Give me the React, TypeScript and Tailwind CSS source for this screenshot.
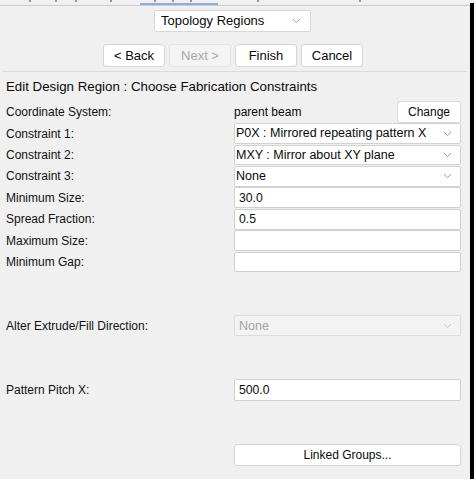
import React from "react";

const Chevron = ({ color = "#9a9a9a" }: { color?: string }) => (
  <svg width="9" height="6" viewBox="0 0 9 6" className="shrink-0">
    <path d="M1 1.2 L4.5 4.6 L8 1.2" fill="none" stroke={color} strokeWidth="1" />
  </svg>
);

const Label = ({ children }: { children: React.ReactNode }) => (
  <div className="w-[228px] shrink-0 flex items-center text-[12px] text-[#111]">{children}</div>
);

const Select = ({ value, disabled = false }: { value: string; disabled?: boolean }) => (
  <div
    className={
      disabled
        ? "w-[227px] h-full flex items-center justify-between pl-[4px] pr-[8px] bg-[#f3f3f3] border border-[#dcdcdc] rounded-[2px] text-[12.5px] text-[#a3a3a3]"
        : "w-[227px] h-full flex items-center justify-between pl-[1px] pr-[8px] bg-white border border-[#d2d2d2] rounded-[2px] text-[12.5px] text-[#0a0a0a]"
    }
  >
    <span className="whitespace-nowrap">{value}</span>
    <Chevron color={disabled ? "#c4c4c4" : "#9a9a9a"} />
  </div>
);

const Input = ({ value }: { value: string }) => (
  <div className="w-[227px] h-full flex items-center pl-[4px] bg-white border border-[#d0d0d0] rounded-[2px] text-[12.2px] text-[#0a0a0a]">
    {value}
  </div>
);

const TopButton = ({ children, disabled = false }: { children: React.ReactNode; disabled?: boolean }) => (
  <div
    className={
      disabled
        ? "w-[62px] h-[23px] flex items-center justify-center bg-[#f4f4f4] border border-[#e2e2e2] rounded-[3px] text-[13px] text-[#a8a8a8]"
        : "w-[62px] h-[23px] flex items-center justify-center bg-white border border-[#d6d6d6] rounded-[3px] text-[13px] text-[#0a0a0a]"
    }
  >
    {children}
  </div>
);

const Dot = () => <span className="w-[2px] h-[2px] bg-[#7a7a7a] rounded-full" />;

export default function App() {
  const rows: { label: string; kind: "select" | "input"; value: string }[] = [
    { label: "Constraint 1:", kind: "select", value: "P0X : Mirrored repeating pattern X" },
    { label: "Constraint 2:", kind: "select", value: "MXY : Mirror about XY plane" },
    { label: "Constraint 3:", kind: "select", value: "None" },
    { label: "Minimum Size:", kind: "input", value: "30.0" },
    { label: "Spread Fraction:", kind: "input", value: "0.5" },
    { label: "Maximum Size:", kind: "input", value: "" },
    { label: "Minimum Gap:", kind: "input", value: "" },
  ];

  return (
    <div
      className="w-[474px] h-[479px] flex bg-[#f0f0f0] overflow-hidden"
      style={{ fontFamily: '"Liberation Sans", Arial, sans-serif' }}
    >
      <div className="w-[470px] h-full flex flex-col">
        {/* cut-off tab strip: only descenders of the tab labels remain visible */}
        <div className="h-[6px] border-b border-[#cccccc] flex items-start">
          <div className="flex items-start h-[5px] w-full">
            <span className="w-[29px]" />
            <Dot />
            <span className="w-[24px]" />
            <Dot />
            <span className="w-[18px]" />
            <Dot />
            <span className="w-[33px]" />
            <Dot />
            <span className="w-[28px]" />
            <div className="w-[78px] h-[5px] flex flex-col justify-between">
              <div className="flex gap-[16px] pl-[14px]">
                <Dot />
                <Dot />
                <Dot />
              </div>
              <span className="h-[2px] bg-[#8aaedb]" />
            </div>
            <span className="w-[39px]" />
            <Dot />
            <span className="w-[100px]" />
            <Dot />
          </div>
        </div>

        {/* wizard dropdown */}
        <div className="mt-[4px] pl-[154px]">
          <div className="w-[157px] h-[22px] flex items-center justify-between pl-[6px] pr-[9px] bg-white border border-[#d8d8d8] rounded-[2px] text-[13px] text-[#0a0a0a]">
            <span>Topology Regions</span>
            <Chevron color="#a0a0a0" />
          </div>
        </div>

        {/* nav buttons */}
        <div className="mt-[12px] pl-[103px] flex gap-[4px]">
          <TopButton>&lt; Back</TopButton>
          <TopButton disabled>Next &gt;</TopButton>
          <TopButton>Finish</TopButton>
          <TopButton>Cancel</TopButton>
        </div>

        <div className="mt-[4px] mx-[3px] h-px bg-[#dadada]" />

        <div className="h-[29px] flex items-center pl-[6px] text-[13.3px] text-[#0a0a0a] whitespace-nowrap">
          Edit Design Region : Choose Fabrication Constraints
        </div>

        <div className="pl-[6px] flex flex-col">
          <div className="h-[22.3px] flex">
            <Label>Coordinate System:</Label>
            <div className="w-[227px] flex items-center justify-between">
              <span className="text-[12px] text-[#0a0a0a]">parent beam</span>
              <div className="w-[64px] h-[22px] flex items-center justify-center bg-white border border-[#dadada] rounded-[2px] text-[12px] text-[#0a0a0a]">
                Change
              </div>
            </div>
          </div>

          {rows.map((r) => (
            <div key={r.label} className="h-[21.4px] flex items-start">
              <div className="h-[20.7px] flex">
                <Label>{r.label}</Label>
                {r.kind === "select" ? <Select value={r.value} /> : <Input value={r.value} />}
              </div>
            </div>
          ))}

          <div className="mt-[42.4px] h-[21px] flex">
            <Label>Alter Extrude/Fill Direction:</Label>
            <Select value="None" disabled />
          </div>

          <div className="mt-[43px] h-[21.5px] flex">
            <Label>Pattern Pitch X:</Label>
            <Input value="500.0" />
          </div>

          <div className="mt-[43px] h-[22px] flex">
            <div className="w-[228px] shrink-0" />
            <div className="w-[227px] h-full flex items-center justify-center bg-white border border-[#d6d6d6] rounded-[3px] text-[12px] text-[#0a0a0a]">
              Linked Groups...
            </div>
          </div>
        </div>
      </div>
      <div className="w-[4px] h-full bg-black mt-[3px]" />
    </div>
  );
}
